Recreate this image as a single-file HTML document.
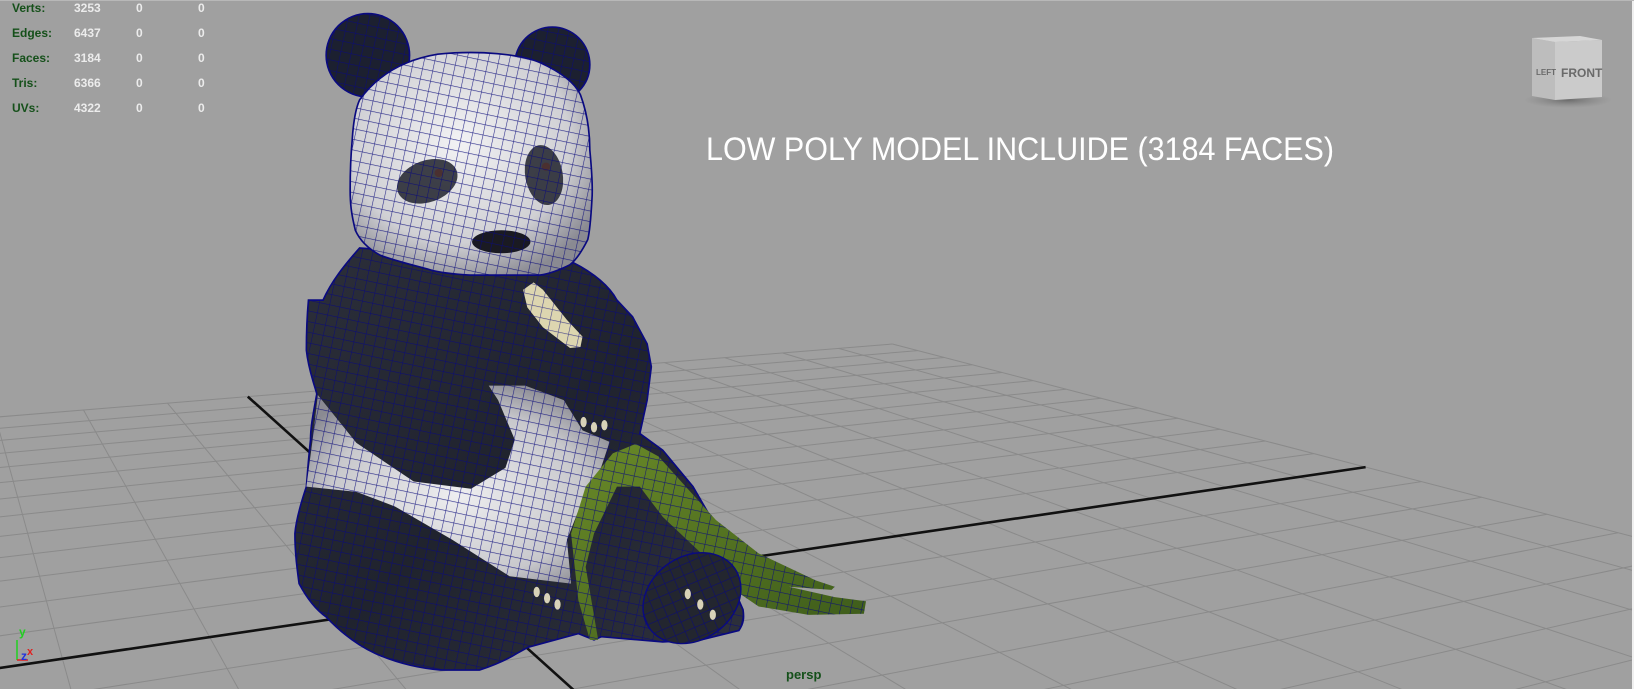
<!DOCTYPE html>
<html><head><meta charset="utf-8">
<style>
html,body{margin:0;padding:0;overflow:hidden;}
body{width:1634px;height:689px;overflow:hidden;background:#a0a0a0;position:relative;font-family:"Liberation Sans",sans-serif;}
svg{display:block;}
.st{position:absolute;font-weight:bold;font-size:12px;line-height:14px;}
.g{color:#15501a;}
.w{color:#ececec;}
</style></head>
<body>
<svg id="sv" width="1634" height="689" style="position:absolute;left:0;top:0" xmlns="http://www.w3.org/2000/svg">
<defs>
<pattern id="m" width="10" height="10" patternUnits="userSpaceOnUse" patternTransform="rotate(12)">
<path d="M0 0H10M0 0V10" stroke="#0a0a7a" stroke-width="1.1" fill="none"/>
</pattern>
<radialGradient id="hw" cx="0.45" cy="0.4" r="0.65"><stop offset="0" stop-color="#f2f2f4"/><stop offset="0.7" stop-color="#d0d0d4"/><stop offset="1" stop-color="#8a8a92"/></radialGradient>
<radialGradient id="bw" cx="0.5" cy="0.55" r="0.6"><stop offset="0" stop-color="#eeeef0"/><stop offset="0.7" stop-color="#c8c8cc"/><stop offset="1" stop-color="#8a8a92"/></radialGradient>
<linearGradient id="bd" x1="0" y1="0" x2="1" y2="1"><stop offset="0" stop-color="#2c2f3a"/><stop offset="0.5" stop-color="#20232e"/><stop offset="1" stop-color="#2e313c"/></linearGradient>
<linearGradient id="gr" x1="0" y1="0" x2="1" y2="1"><stop offset="0" stop-color="#6a8a28"/><stop offset="1" stop-color="#3c5a1a"/></linearGradient>
<radialGradient id="sh" cx="0.5" cy="0.5" r="0.5"><stop offset="0" stop-color="#555" stop-opacity="0.7"/><stop offset="1" stop-color="#777" stop-opacity="0"/></radialGradient>
<path id="body" d="M345,238 C330,255 318,270 310,288 L296,288 C294,310 294,330 294,336 C296,355 302,370 304,378 C300,400 298,410 298,422 C296,440 295,455 294,467 C288,485 284,500 283,512 C283,530 285,545 287,560 C295,575 303,585 313,592 C330,610 345,620 360,627 C380,636 400,641 423,643 L460,643 C475,638 488,632 496,627 L507,621 L555,608 L570,614 L577,611 L636,616 L673,614 L709,605 C714,598 714,592 713,585 L702,560 L691,512 L665,467 L636,432 L614,416 L621,384 L625,352 L621,330 L607,304 L592,288 C585,275 570,262 550,252 Z"/>
<path id="head" d="M345,96 C360,75 384,58 420,52 C460,48 500,52 518,60 C540,70 552,80 557,91 C564,110 566,130 566,144 C568,165 569,180 568,192 C567,210 566,222 564,230 C558,242 552,250 547,254 C535,260 525,263 518,264 L451,264 C435,263 420,261 413,259 C395,254 378,250 365,245 C352,238 345,230 341,221 C337,205 336,195 336,182 C336,160 337,145 338,134 C339,118 341,105 345,96 Z"/>
<path id="belly" d="M305,379 L342,425 L397,462 L452,469 L485,449 L494,422 L478,384 L469,370 L504,370 L541,384 L559,413 L585,424 L577,448 L559,480 L544,518 L548,560 L489,553 L434,518 L379,486 L342,472 L294,467 L300,422 Z"/>
<path id="green" d="M610,426 L632,438 L658,467 L687,499 L728,531 L783,557 L801,563 L798,566 L757,563 L801,573 L831,577 L829,589 L776,590 L728,582 L709,569 L673,531 L636,496 L614,467 L592,467 L570,512 L562,544 L574,614 L566,614 L555,576 L548,512 L562,467 L588,435 Z"/>
<ellipse id="foot" cx="664" cy="574" rx="50" ry="40" transform="rotate(-35 664 574)"/>
<circle id="earL" cx="353" cy="53" r="40"/>
<circle id="earR" cx="530" cy="62" r="36"/>
</defs>
<g id="grid" stroke="#8a8a8a" stroke-width="1" fill="none"></g>
<g id="axes" stroke="#111" stroke-width="2.6" fill="none"></g>

<text x="706" y="160" fill="#ffffff" font-family="Liberation Sans, sans-serif" font-size="32" textLength="628" lengthAdjust="spacingAndGlyphs">LOW POLY MODEL INCLUIDE (3184 FACES)</text>

<g transform="scale(1.0421)">
 <use href="#body" fill="url(#bd)"/>
 <use href="#body" fill="url(#m)" opacity="0.85"/>
 <use href="#body" fill="none" stroke="#0a0a80" stroke-width="1.6"/>
 <g>
  <use href="#earL" fill="#1c2030"/><use href="#earR" fill="#1c2030"/>
  <use href="#earL" fill="url(#m)" opacity="0.85"/><use href="#earR" fill="url(#m)" opacity="0.85"/>
  <use href="#earL" fill="none" stroke="#0a0a80" stroke-width="1.6"/><use href="#earR" fill="none" stroke="#0a0a80" stroke-width="1.6"/>
 </g>
 <use href="#head" fill="url(#hw)"/>
 <ellipse cx="410" cy="174" rx="30" ry="20" transform="rotate(-20 410 174)" fill="#2a2c36" opacity="0.9"/>
 <ellipse cx="522" cy="168" rx="18" ry="29" transform="rotate(-10 522 168)" fill="#2a2c36" opacity="0.9"/>
 <circle cx="421" cy="166" r="4" fill="#4a3030"/>
 <circle cx="524" cy="160" r="4" fill="#4a3030"/>
 <ellipse cx="481" cy="232" rx="28" ry="11" fill="#1a1a22"/>
 <use href="#head" fill="url(#m)" opacity="0.85"/>
 <use href="#head" fill="none" stroke="#0a0a80" stroke-width="1.6"/>
 <use href="#belly" fill="url(#bw)"/>
 <use href="#belly" fill="url(#m)" opacity="0.85"/>
 <use href="#green" fill="url(#gr)"/>
 <use href="#green" fill="url(#m)" opacity="0.85"/>
 <use href="#foot" fill="#23262f"/>
 <use href="#foot" fill="url(#m)" opacity="0.85"/>
 <use href="#foot" fill="none" stroke="#0a0a80" stroke-width="1.4"/>
 <path d="M502,278 L512,271 L521,278 L544,307 L559,323 L557,333 L547,334 L521,314 L506,295 Z" fill="#ddd6b0"/>
 <path d="M502,278 L512,271 L521,278 L544,307 L559,323 L557,333 L547,334 L521,314 L506,295 Z" fill="url(#m)" opacity="0.7"/>
 <g fill="#d8d2b8">
  <ellipse cx="560" cy="405" rx="3" ry="5"/><ellipse cx="570" cy="410" rx="3" ry="5"/><ellipse cx="580" cy="408" rx="3" ry="5"/>
  <ellipse cx="515" cy="568" rx="3" ry="5"/><ellipse cx="525" cy="574" rx="3" ry="5"/><ellipse cx="535" cy="580" rx="3" ry="5"/>
  <ellipse cx="660" cy="570" rx="3" ry="5"/><ellipse cx="672" cy="580" rx="3" ry="5"/><ellipse cx="684" cy="590" rx="3" ry="5"/>
 </g>
</g>

<line x1="17" y1="640" x2="17" y2="660" stroke="#20d020" stroke-width="1.5"/>
<line x1="17" y1="660" x2="28" y2="660" stroke="#e02020" stroke-width="1.5"/>
<text x="19" y="636" fill="#20d020" font-size="12" font-weight="bold" font-family="Liberation Sans, sans-serif">y</text>
<text x="21" y="660" fill="#2030e0" font-size="12" font-weight="bold" font-family="Liberation Sans, sans-serif">z</text>
<text x="27" y="655" fill="#e02020" font-size="11" font-weight="bold" font-family="Liberation Sans, sans-serif">x</text>
<text x="786" y="679" fill="#15501a" font-size="13" font-weight="bold" font-family="Liberation Sans, sans-serif">persp</text>

<ellipse cx="1568" cy="100" rx="44" ry="8" fill="url(#sh)"/>
<polygon points="1532,38 1555,42 1555,100 1532,96" fill="#bdbdbd"/>
<polygon points="1555,42 1602,40 1602,97 1555,100" fill="#cbcbcb"/>
<polygon points="1532,38 1580,36 1602,40 1555,42" fill="#d6d6d6"/>
<text x="1561" y="77" fill="#6a6a6a" font-size="12" font-weight="bold" font-family="Liberation Sans, sans-serif">FRONT</text>
<text x="1536" y="75" fill="#6a6a6a" font-size="8" font-weight="bold" font-family="Liberation Sans, sans-serif">LEFT</text>
<rect x="1632" y="0" width="2" height="689" fill="#f0f0f0"/>
<rect x="0" y="0" width="1634" height="1" fill="#b8b8b8"/>
</svg>

<div class="st g" style="left:12px;top:1px">Verts:</div><div class="st w" style="left:74px;top:1px">3253</div><div class="st w" style="left:136px;top:1px">0</div><div class="st w" style="left:198px;top:1px">0</div>
<div class="st g" style="left:12px;top:26px">Edges:</div><div class="st w" style="left:74px;top:26px">6437</div><div class="st w" style="left:136px;top:26px">0</div><div class="st w" style="left:198px;top:26px">0</div>
<div class="st g" style="left:12px;top:51px">Faces:</div><div class="st w" style="left:74px;top:51px">3184</div><div class="st w" style="left:136px;top:51px">0</div><div class="st w" style="left:198px;top:51px">0</div>
<div class="st g" style="left:12px;top:76px">Tris:</div><div class="st w" style="left:74px;top:76px">6366</div><div class="st w" style="left:136px;top:76px">0</div><div class="st w" style="left:198px;top:76px">0</div>
<div class="st g" style="left:12px;top:101px">UVs:</div><div class="st w" style="left:74px;top:101px">4322</div><div class="st w" style="left:136px;top:101px">0</div><div class="st w" style="left:198px;top:101px">0</div>

<script>
(function(){
var NS="http://www.w3.org/2000/svg";
var VA=[3834,104],VB=[-96,87],O=[472,598.5],s=0.362,t=0.652;
function P(u,v){var w=s*u+t*v+1;return [(s*u*VA[0]+t*v*VB[0]+O[0])/w,(s*u*VA[1]+t*v*VB[1]+O[1])/w];}
var g=document.getElementById('grid'),ax=document.getElementById('axes');
function L(p,q,par){var l=document.createElementNS(NS,'line');l.setAttribute('x1',p[0].toFixed(1));l.setAttribute('y1',p[1].toFixed(1));l.setAttribute('x2',q[0].toFixed(1));l.setAttribute('y2',q[1].toFixed(1));par.appendChild(l);}
var Nu=10,Nv=13,eps=0.06;
for(var i=-Nu;i<=Nu;i++){var c=i/Nu;var vmin=Math.max(-1,(eps-1-s*c)/t);if(vmin>=1)continue;L(P(c,vmin),P(c,1),i==0?ax:g);}
for(var j=-Nv;j<=Nv;j++){var c2=j/Nv;var umin=Math.max(-1,(eps-1-t*c2)/s);if(umin>=1)continue;L(P(umin,c2),P(1,c2),j==0?ax:g);}
})();
</script>
</body></html>
